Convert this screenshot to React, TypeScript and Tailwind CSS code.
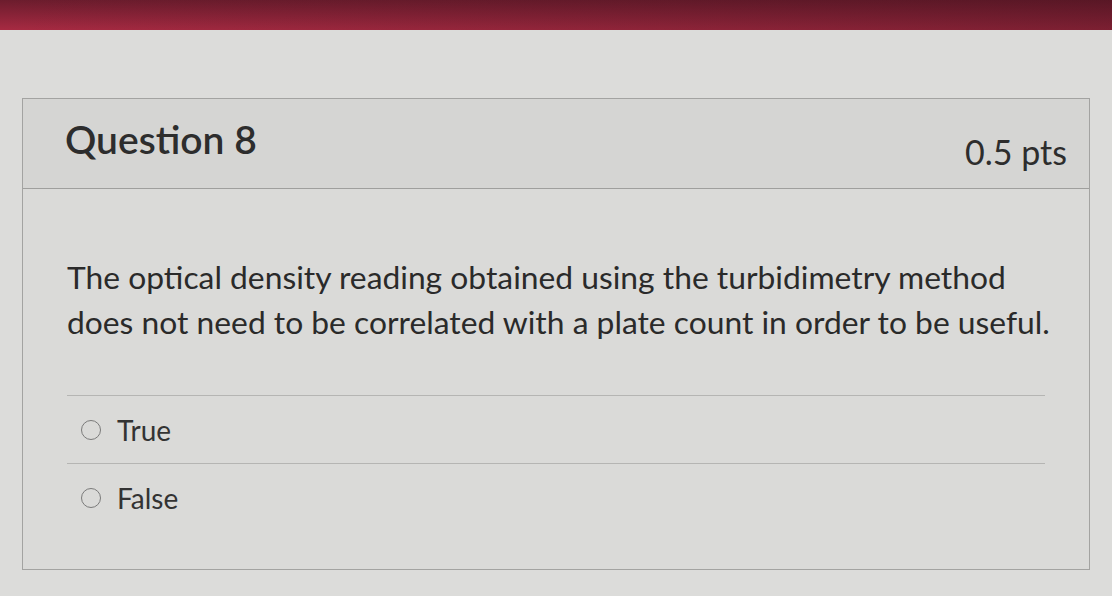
import React from 'react';

const options = ['True', 'False'];

const App: React.FC = () => {
  return (
    <div
      className="w-[1112px] h-[596px] overflow-hidden bg-[#dcdcda] text-[#2d2d2d]"
      style={{ fontFamily: 'Lato, "Open Sans", sans-serif' }}
    >
      {/* Course nav strip */}
      <div className="h-[30px] bg-gradient-to-b from-[#6c1c2d] to-[#a72a42]">
        <div className="h-full bg-gradient-to-r from-transparent to-[#3c0f1a]/40"></div>
      </div>

      <div className="pt-[68px] pl-[22px] pr-[22px]">
        <div className="border border-[#a3a3a1] bg-[#dadad8]">
          {/* Header */}
          <div className="h-[90px] flex items-center justify-between pl-[42px] pr-[22px] bg-[#d5d5d3] border-b border-[#9f9f9d]">
            <h2 className="text-[39px] font-semibold -mt-2">Question 8</h2>
            <span className="text-[34px] mt-4">0.5 pts</span>
          </div>

          {/* Body */}
          <div className="px-[44px] pt-[66px] pb-[38px]">
            <p className="text-[31.8px] leading-[45px] text-[#2a2a2a] whitespace-nowrap">
              The optical density reading obtained using the turbidimetry method
              <br />
              does not need to be correlated with a plate count in order to be useful.
            </p>

            <div className="mt-[50px]">
              {options.map((opt) => (
                <label
                  key={opt}
                  className="flex items-center gap-[16px] h-[68px] pl-[14px] border-t border-[#b5b5b3]"
                >
                  <span className="w-[20px] h-[20px] rounded-full border-[1.5px] border-[#7a7a7a]"></span>
                  <span className="text-[28px] text-[#333]">{opt}</span>
                </label>
              ))}
            </div>
          </div>
        </div>
      </div>
    </div>
  );
};

export default App;
